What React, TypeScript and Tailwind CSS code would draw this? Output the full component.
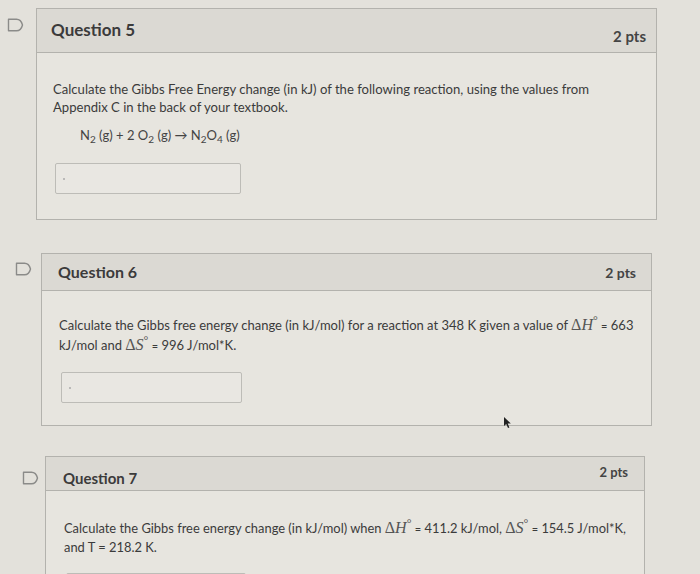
import type { ReactNode } from "react";

function FlagIcon({ className }: { className: string }) {
  return (
    <svg className={className} width="17" height="14" viewBox="0 0 17 14" fill="none">
      <path
        d="M1.5 1.2 H9.5 Q14 1.2 15.5 7 Q14 12.8 9.5 12.8 H1.5 Z"
        stroke="#8b8b89"
        strokeWidth="1.4"
        strokeLinejoin="round"
      />
    </svg>
  );
}

function M({ children }: { children: ReactNode }) {
  return (
    <span className="font-['Liberation_Serif','DejaVu_Serif',serif] text-[16px] text-[#555]">
      {children}
    </span>
  );
}

function AnswerBox({ className }: { className: string }) {
  return (
    <div className={`h-[31px] rounded-[2px] border border-[#bdbcb7] bg-[#e9e7e2] ${className}`}>
      <div className="ml-[7px] mt-[14px] h-[2px] w-[2px] rounded-full bg-[#aaa]" />
    </div>
  );
}

export default function App() {
  return (
    <div className="relative h-[574px] w-[700px] overflow-hidden bg-[#e3e1db] font-['Lato','Open_Sans',sans-serif] text-[#3b3b3b]">
      {/* Question 5 */}
      <div className="flex pt-[8px]">
        <FlagIcon className="ml-[7px] mt-[10px] shrink-0" />
        <div className="ml-[12px] h-[212px] w-[621px] border border-[#b3b2ad] bg-[#e7e5df]">
          <div className="flex h-[44px] items-start justify-between border-b border-[#b3b2ad] bg-[#dbd9d3] pl-[14px] pr-[10px]">
            <span className="mt-[8px] text-[17px] font-bold">Question 5</span>
            <span className="mt-[16px] text-[15px] font-bold text-[#444]">2 pts</span>
          </div>
          <div className="pl-[16px] pt-[27px] text-[13.1px] leading-[18px]">
            <p>Calculate the Gibbs Free Energy change (in kJ) of the following reaction, using the values from</p>
            <p>Appendix C in the back of your textbook.</p>
            <p className="ml-[27px] mt-[10px] text-[13px] text-[#444]">
              N<sub className="text-[10px]">2</sub> (g) + 2 O<sub className="text-[10px]">2</sub> (g) → N
              <sub className="text-[10px]">2</sub>O<sub className="text-[10px]">4</sub> (g)
            </p>
            <AnswerBox className="ml-[2px] mt-[19px] w-[186px]" />
          </div>
        </div>
      </div>

      {/* Question 6 */}
      <div className="flex pt-[33px]">
        <FlagIcon className="ml-[15px] mt-[9px] shrink-0" />
        <div className="ml-[9px] h-[173px] w-[611px] border border-[#b3b2ad] bg-[#e7e5df]">
          <div className="flex h-[37px] items-center justify-between border-b border-[#b3b2ad] bg-[#dbd9d3] pl-[16px] pr-[15px]">
            <span className="text-[16px] font-bold">Question 6</span>
            <span className="text-[14px] font-bold text-[#444]">2 pts</span>
          </div>
          <div className="pl-[17px] pt-[24px] text-[13px] leading-[19px]">
            <p>
              Calculate the Gibbs free energy change (in kJ/mol) for a reaction at 348 K given a value of{" "}
              <M>
                Δ<i>H</i>
                <sup>°</sup>
              </M>{" "}
              <span className="text-[11px]">=</span> 663
            </p>
            <p>
              kJ/mol and{" "}
              <M>
                Δ<i>S</i>
                <sup>°</sup>
              </M>{" "}
              <span className="text-[11px]">=</span> 996 J/mol*K.
            </p>
            <AnswerBox className="ml-[2px] mt-[17px] w-[181px]" />
          </div>
        </div>
      </div>

      {/* Question 7 */}
      <div className="flex pt-[30px]">
        <FlagIcon className="ml-[22px] mt-[15px] shrink-0" />
        <div className="ml-[6px] h-[200px] w-[600px] border border-[#b3b2ad] bg-[#e7e5df]">
          <div className="flex h-[34px] items-start justify-between border-b border-[#b3b2ad] bg-[#dbd9d3] pl-[17px] pr-[16px]">
            <span className="mt-[10px] text-[15px] font-bold">Question 7</span>
            <span className="mt-[6px] text-[13px] font-bold text-[#444]">2 pts</span>
          </div>
          <div className="pl-[18px] pt-[27px] text-[12.9px] leading-[19px]">
            <p>
              Calculate the Gibbs free energy change (in kJ/mol) when{" "}
              <M>
                Δ<i>H</i>
                <sup>°</sup>
              </M>{" "}
              <span className="text-[11px]">=</span> 411.2 kJ/mol,{" "}
              <M>
                Δ<i>S</i>
                <sup>°</sup>
              </M>{" "}
              <span className="text-[11px]">=</span> 154.5 J/mol*K,
            </p>
            <p>and T = 218.2 K.</p>
            <AnswerBox className="ml-[2px] mt-[16px] w-[180px]" />
          </div>
        </div>
      </div>

      {/* mouse pointer */}
      <svg className="absolute left-[503px] top-[416px]" width="9" height="13" viewBox="0 0 9 13">
        <path d="M1 1 L1 10 L3.2 8 L5 12 L6.4 11.4 L4.7 7.6 L7.8 7.4 Z" fill="#222" />
      </svg>
    </div>
  );
}
